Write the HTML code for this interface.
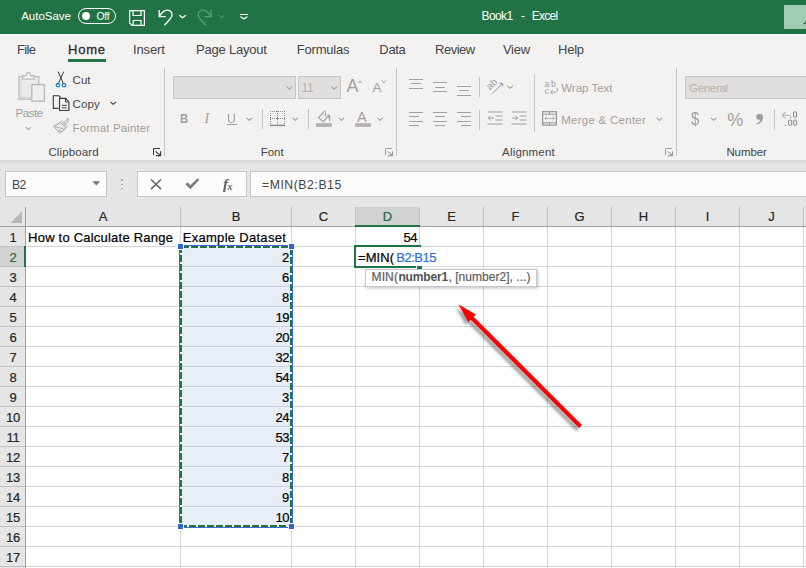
<!DOCTYPE html>
<html><head><meta charset="utf-8"><title>Book1 - Excel</title>
<style>
html,body{margin:0;padding:0;}
body{width:806px;height:568px;overflow:hidden;position:relative;background:#fff;font-family:"Liberation Sans",sans-serif;}
.t{position:absolute;white-space:pre;line-height:1;}
.s{-webkit-text-stroke:0.22px currentColor;}
.a{position:absolute;}
svg{position:absolute;overflow:visible;}
</style></head><body>
<div class="a" style="left:0px;top:0px;width:806px;height:34px;background:#217346;"></div>
<div class="a" style="left:784px;top:5px;width:22px;height:24px;background:#9fcdb3;"></div>
<svg style="left:803px;top:21px" width="3" height="4" viewBox="0 0 3 4"><path d="M0.8 3 L3 1" stroke="#1f4d36" stroke-width="1.2"/></svg>
<div class="a" style="left:78px;top:8px;width:36px;height:14px;border:1px solid #fff;border-radius:8px;"></div>
<div class="a" style="left:82px;top:12px;width:8px;height:8px;border-radius:4px;background:#fff;"></div>
<svg style="left:129px;top:10px" width="16" height="16" viewBox="0 0 16 16"><path d="M0.6 0.6 H15.4 V15.4 H3 L0.6 13 Z" fill="none" stroke="#fff" stroke-width="1.2"/><path d="M4 0.6 V5.5 H12 V0.6 M4.2 15.4 V10.5 H12 V15.4" fill="none" stroke="#fff" stroke-width="1.2"/></svg>
<svg style="left:158px;top:9px" width="16" height="17" viewBox="0 0 16 17"><path d="M1.2 1 V7.6 H7.8" fill="none" stroke="#fff" stroke-width="1.3"/><path d="M1.6 7.2 C4 2.5 8 0.3 11 1.3 C14.5 2.6 15 6.5 12.5 9.5 L6.5 16.3" fill="none" stroke="#fff" stroke-width="1.3"/></svg>
<svg style="left:179px;top:15px" width="6.4" height="3.6" viewBox="0 0 6.4 3.6"><g transform="translate(0.4 0.2)"><path d="M0.3 0.3 L3.2 2.6 L6.1 0.3" fill="none" stroke="#fff" stroke-width="1.3" stroke-linecap="round" stroke-linejoin="round"/></g></svg>
<svg style="left:196px;top:9px" width="16" height="17" viewBox="0 0 16 17"><g transform="translate(0.2 0)"><g transform="translate(16,0) scale(-1,1)"><path d="M1.2 1 V7.6 H7.8" fill="none" stroke="#5c9b78" stroke-width="1.3"/><path d="M1.6 7.2 C4 2.5 8 0.3 11 1.3 C14.5 2.6 15 6.5 12.5 9.5 L6.5 16.3" fill="none" stroke="#5c9b78" stroke-width="1.3"/></g></g></svg>
<svg style="left:219px;top:15px" width="5.4" height="3.4" viewBox="0 0 5.4 3.4"><g transform="translate(0 0.2)"><path d="M0.3 0.3 L2.7 2.4 L5.1 0.3" fill="none" stroke="#4c8d69" stroke-width="1.2" stroke-linecap="round" stroke-linejoin="round"/></g></svg>
<div class="a" style="left:240px;top:13.7px;width:8px;height:1.3px;background:#fff;"></div>
<svg style="left:240px;top:16px" width="6.6" height="3.5" viewBox="0 0 6.6 3.5"><g transform="translate(0.6 0.6)"><path d="M0.3 0.3 L3.3 2.5 L6.3 0.3" fill="none" stroke="#fff" stroke-width="1.3" stroke-linecap="round" stroke-linejoin="round"/></g></svg>
<div class="a" style="left:0px;top:33px;width:806px;height:1px;background:#1a6b3e;"></div>
<div class="a" style="left:0px;top:34px;width:806px;height:126px;background:#f3f2f1;"></div>
<div class="a" style="left:0px;top:34px;width:806px;height:1px;background:#fbfafa;"></div>
<div class="a" style="left:68px;top:59px;width:37.5px;height:2.6px;background:#217346;"></div>
<div class="a" style="left:0;top:160px;width:806px;height:47px;background:linear-gradient(#d2d2d2 0px,#dcdcdc 2px,#e4e4e4 5px,#e6e6e6 7px);"></div>
<div class="a" style="left:164px;top:68px;width:1px;height:88px;background:#c8c6c4;"></div>
<div class="a" style="left:396px;top:68px;width:1px;height:88px;background:#c8c6c4;"></div>
<div class="a" style="left:676px;top:68px;width:1px;height:88px;background:#c8c6c4;"></div>
<svg style="left:26px;top:127px" width="5" height="3.4" viewBox="0 0 5 3.4"><g transform="translate(0 0.3)"><path d="M0.3 0.3 L2.5 2.4 L4.7 0.3" fill="none" stroke="#a19f9d" stroke-width="1.1" stroke-linecap="round" stroke-linejoin="round"/></g></svg>
<svg style="left:110px;top:101px" width="5.6" height="3.6" viewBox="0 0 5.6 3.6"><g transform="translate(0.4 0.8)"><path d="M0.3 0.3 L2.8 2.6 L5.3 0.3" fill="none" stroke="#444" stroke-width="1.2" stroke-linecap="round" stroke-linejoin="round"/></g></svg>
<svg style="left:0;top:0" width="806" height="170" viewBox="0 0 806 170" fill="none"><rect x="18.9" y="76.6" width="19.8" height="22.6" fill="#ebeae9" stroke="#bfbdbb" stroke-width="1.3"/><path d="M20.8 78.5 V97.4 H37" stroke="#d6d4d2" stroke-width="1"/><path d="M22.6 79.2 V75.6 H26.2 Q26.4 72.4 28.4 72.4 Q30.4 72.4 30.6 75.6 H34.2 V79.2 Z" fill="#f3f2f1" stroke="#bfbdbb" stroke-width="1.2"/><rect x="31.8" y="84.6" width="12.6" height="16.6" fill="#efeeed" stroke="#bfbdbb" stroke-width="1.4"/><path d="M58.1 71.6 L63.6 84 M63.7 71.6 L58.2 84" stroke="#3b3a39" stroke-width="1"/><circle cx="57.9" cy="85.2" r="1.7" stroke="#1e8ad6" stroke-width="1.35"/><circle cx="64" cy="85.2" r="1.7" stroke="#1e8ad6" stroke-width="1.35"/><path d="M58.6 108.4 H53.3 V95.7 H58.8 L60.6 97.5" stroke="#3b3a39" stroke-width="1.15"/><path d="M59.5 98.4 H65.6 L68.9 101.9 V110.5 H59.5 Z" fill="#f3f2f1" stroke="#3b3a39" stroke-width="1.15"/><path d="M65.5 98.6 V102 H68.7" stroke="#3b3a39" stroke-width="1"/><path d="M61.8 105.3 H66.7 M61.8 107.9 H66.7" stroke="#3b3a39" stroke-width="1"/><path d="M60.6 122.6 L53.4 126.3 L60.2 133.5 L66.3 127.6 Z" fill="#eae9e8" stroke="#a9a7a5" stroke-width="1" stroke-linejoin="round"/><path d="M55 126.6 L64.3 129.3 M57.6 130.5 L62 131.7" stroke="#a9a7a5" stroke-width="0.9"/><path d="M61.3 121 L67.4 126.4 L66.2 127.7 L60.2 122.5 Z" fill="#f3f2f1" stroke="#a9a7a5" stroke-width="0.9" stroke-linejoin="round"/><path d="M64.8 123.7 L67.8 119.8" stroke="#a9a7a5" stroke-width="2.9" stroke-linecap="round"/><path d="M64.8 123.7 L67.8 119.8" stroke="#f0efee" stroke-width="1.1" stroke-linecap="round"/><path d="M270.5 111 V125" stroke="#8f8d8b" stroke-width="1" stroke-dasharray="1 1" shape-rendering="crispEdges"/><path d="M277.5 111 V125" stroke="#8f8d8b" stroke-width="1" stroke-dasharray="1 1" shape-rendering="crispEdges"/><path d="M284.5 111 V125" stroke="#8f8d8b" stroke-width="1" stroke-dasharray="1 1" shape-rendering="crispEdges"/><path d="M270 111.5 H285" stroke="#8f8d8b" stroke-width="1" stroke-dasharray="1 1" shape-rendering="crispEdges"/><path d="M270 118.5 H285" stroke="#8f8d8b" stroke-width="1" stroke-dasharray="1 1" shape-rendering="crispEdges"/><path d="M276 118.5 H279 M277.5 117 V120" stroke="#8f8d8b" stroke-width="1" shape-rendering="crispEdges"/><rect x="270" y="124.7" width="15" height="1.4" fill="#8a8886"/><path d="M323.4 112.5 L318.5 117.6 L323.2 121.8 L328 116.3" fill="#ecebea" stroke="#a19f9d" stroke-width="1.1" stroke-linejoin="round"/><path d="M323.4 112.6 L323.9 111.3 Q324.7 110.7 325.4 111.4 L325.6 116.3" stroke="#a19f9d" stroke-width="1"/><path d="M327.4 115.2 Q329.4 114 330.1 116.6 L329.7 121 Q329.2 117.5 328.2 116.2 Z" fill="#a19f9d" stroke="#a19f9d" stroke-width="0.7"/><rect x="316.1" y="123.2" width="15.8" height="3.7" fill="#b3b0ae"/><rect x="355.2" y="123.2" width="15.7" height="3.7" fill="#b3b0ae"/><text x="490.1" y="90.4" font-family="Liberation Sans" font-size="10" fill="#a19f9d" transform="rotate(-45 490.1 90.4)">ab</text><path d="M492.2 93.6 L502.5 83.5 M499.2 83.4 H502.6 V86.8" stroke="#a19f9d" stroke-width="1"/><text x="544.5" y="87" font-family="Liberation Sans" font-size="8.8" fill="#a19f9d" letter-spacing="1.7">ab</text><text x="544.5" y="94" font-family="Liberation Sans" font-size="8.8" fill="#a19f9d">c</text><path d="M556.3 87.6 Q559.6 90.2 555.6 92.2 H550.6 M552.9 90.1 L550.5 92.2 L552.9 94.4" stroke="#a19f9d" stroke-width="0.9"/><rect x="542.6" y="111.7" width="13.8" height="13.4" stroke="#979593" stroke-width="1.2"/><path d="M542.6 114.2 H556.4 M542.6 122.8 H556.4 M549.5 111.7 V114.2 M549.5 122.8 V125.1" stroke="#979593" stroke-width="1"/><path d="M544.8 118.5 H554.3 M546.7 116.6 L544.7 118.5 L546.7 120.4 M552.4 116.6 L554.4 118.5 L552.4 120.4" stroke="#b5b3b1" stroke-width="1"/></svg>
<svg style="left:152px;top:148px" width="10" height="9" viewBox="0 0 10 9"><g transform="translate(0.5 0)"><path d="M1 6.9 V0.5 H7.5" fill="none" stroke="#3b3a39" stroke-width="1"/><path d="M3 3.4 L8 7.5 M8.1 3.2 V7.6 H3.5" fill="none" stroke="#3b3a39" stroke-width="1.1"/></g></svg>
<div class="a" style="left:173px;top:76px;width:123px;height:23px;background:#e1dfdd;border:1px solid #c8c6c4;box-sizing:border-box;"></div>
<svg style="left:286px;top:86px" width="5.6" height="3.6" viewBox="0 0 5.6 3.6"><g transform="translate(0.6 0.6)"><path d="M0.3 0.3 L2.8 2.6 L5.3 0.3" fill="none" stroke="#a6a4a2" stroke-width="1.1" stroke-linecap="round" stroke-linejoin="round"/></g></svg>
<div class="a" style="left:298px;top:76px;width:43px;height:23px;background:#e1dfdd;border:1px solid #c8c6c4;box-sizing:border-box;"></div>
<svg style="left:331px;top:86px" width="5.6" height="3.6" viewBox="0 0 5.6 3.6"><g transform="translate(0.4 0.6)"><path d="M0.3 0.3 L2.8 2.6 L5.3 0.3" fill="none" stroke="#a6a4a2" stroke-width="1.1" stroke-linecap="round" stroke-linejoin="round"/></g></svg>
<svg style="left:357px;top:80px" width="6" height="4" viewBox="0 0 6 4"><g transform="translate(0.6 0.3)"><path d="M0.4 3 L2.4 0.7 L4.4 3" fill="none" stroke="#a19f9d" stroke-width="1"/></g></svg>
<svg style="left:381px;top:79px" width="6" height="4" viewBox="0 0 6 4"><g transform="translate(0.2 0.9)"><path d="M0.4 0.6 L2.5 3 L4.6 0.6" fill="none" stroke="#a19f9d" stroke-width="1"/></g></svg>
<div class="a" style="left:227px;top:124.2px;width:9.5px;height:1px;background:#a19f9d;"></div>
<svg style="left:246px;top:117px" width="5.4" height="3.5" viewBox="0 0 5.4 3.5"><g transform="translate(0.6 0.9)"><path d="M0.3 0.3 L2.7 2.5 L5.1 0.3" fill="none" stroke="#a19f9d" stroke-width="1.1" stroke-linecap="round" stroke-linejoin="round"/></g></svg>
<div class="a" style="left:262px;top:109px;width:1px;height:20px;background:#c8c6c4;"></div>
<svg style="left:292px;top:117px" width="5.4" height="3.5" viewBox="0 0 5.4 3.5"><g transform="translate(0.6 0.9)"><path d="M0.3 0.3 L2.7 2.5 L5.1 0.3" fill="none" stroke="#a19f9d" stroke-width="1.1" stroke-linecap="round" stroke-linejoin="round"/></g></svg>
<div class="a" style="left:308px;top:109px;width:1px;height:20px;background:#c8c6c4;"></div>
<svg style="left:338px;top:117px" width="5.4" height="3.5" viewBox="0 0 5.4 3.5"><g transform="translate(0.8 0.9)"><path d="M0.3 0.3 L2.7 2.5 L5.1 0.3" fill="none" stroke="#a19f9d" stroke-width="1.1" stroke-linecap="round" stroke-linejoin="round"/></g></svg>
<svg style="left:377px;top:117px" width="5.4" height="3.5" viewBox="0 0 5.4 3.5"><g transform="translate(0.5 0.9)"><path d="M0.3 0.3 L2.7 2.5 L5.1 0.3" fill="none" stroke="#a19f9d" stroke-width="1.1" stroke-linecap="round" stroke-linejoin="round"/></g></svg>
<svg style="left:384px;top:148px" width="10" height="9" viewBox="0 0 10 9"><g transform="translate(0.5 0)"><path d="M1 6.9 V0.5 H7.5" fill="none" stroke="#a3a09e" stroke-width="1"/><path d="M3 3.4 L8 7.5 M8.1 3.2 V7.6 H3.5" fill="none" stroke="#a3a09e" stroke-width="1.1"/></g></svg>
<div class="a" style="left:409px;top:78.8px;width:14px;height:1px;background:#a19f9d;"></div><div class="a" style="left:411px;top:83.2px;width:10px;height:1px;background:#a19f9d;"></div><div class="a" style="left:409px;top:87.6px;width:14px;height:1px;background:#a19f9d;"></div>
<div class="a" style="left:433px;top:82.2px;width:14px;height:1px;background:#a19f9d;"></div><div class="a" style="left:435px;top:86.6px;width:10px;height:1px;background:#a19f9d;"></div><div class="a" style="left:433px;top:91px;width:14px;height:1px;background:#a19f9d;"></div>
<div class="a" style="left:457px;top:86px;width:14px;height:1px;background:#a19f9d;"></div><div class="a" style="left:459px;top:90.4px;width:10px;height:1px;background:#a19f9d;"></div><div class="a" style="left:457px;top:94.8px;width:14px;height:1px;background:#a19f9d;"></div>
<div class="a" style="left:479px;top:77px;width:1px;height:20px;background:#c8c6c4;"></div>
<svg style="left:507px;top:85px" width="5.4" height="3.5" viewBox="0 0 5.4 3.5"><g transform="translate(0.4 0.8)"><path d="M0.3 0.3 L2.7 2.5 L5.1 0.3" fill="none" stroke="#a19f9d" stroke-width="1.1" stroke-linecap="round" stroke-linejoin="round"/></g></svg>
<div class="a" style="left:533.8px;top:74px;width:1px;height:58px;background:#c8c6c4;"></div>
<div class="a" style="left:409px;top:112.2px;width:14px;height:1px;background:#a19f9d;"></div><div class="a" style="left:409px;top:116.4px;width:10px;height:1px;background:#a19f9d;"></div><div class="a" style="left:409px;top:120.6px;width:14px;height:1px;background:#a19f9d;"></div><div class="a" style="left:409px;top:124.8px;width:10px;height:1px;background:#a19f9d;"></div>
<div class="a" style="left:433px;top:112.2px;width:14px;height:1px;background:#a19f9d;"></div><div class="a" style="left:435px;top:116.4px;width:10px;height:1px;background:#a19f9d;"></div><div class="a" style="left:433px;top:120.6px;width:14px;height:1px;background:#a19f9d;"></div><div class="a" style="left:435px;top:124.8px;width:10px;height:1px;background:#a19f9d;"></div>
<div class="a" style="left:457px;top:112.2px;width:14px;height:1px;background:#a19f9d;"></div><div class="a" style="left:461px;top:116.4px;width:10px;height:1px;background:#a19f9d;"></div><div class="a" style="left:457px;top:120.6px;width:14px;height:1px;background:#a19f9d;"></div><div class="a" style="left:461px;top:124.8px;width:10px;height:1px;background:#a19f9d;"></div>
<div class="a" style="left:479px;top:109.5px;width:1px;height:20px;background:#c8c6c4;"></div>
<svg style="left:487px;top:111px" width="15" height="14" viewBox="0 0 15 14"><g transform="translate(0.5 0.5)"><path d="M0 0.5 H15 M8 4.5 H15 M8 8.5 H15 M0 12.5 H15" stroke="#a19f9d" stroke-width="1"/><path d="M6.5 6.5 H0.8 M3 4.3 L0.8 6.5 L3 8.7" fill="none" stroke="#a19f9d" stroke-width="1"/></g></svg>
<svg style="left:511px;top:111px" width="15" height="14" viewBox="0 0 15 14"><g transform="translate(0.5 0.5)"><path d="M0 0.5 H15 M8 4.5 H15 M8 8.5 H15 M0 12.5 H15" stroke="#a19f9d" stroke-width="1"/><path d="M0.5 6.5 H6.2 M4 4.3 L6.2 6.5 L4 8.7" fill="none" stroke="#a19f9d" stroke-width="1"/></g></svg>
<svg style="left:656px;top:117px" width="5.4" height="3.5" viewBox="0 0 5.4 3.5"><g transform="translate(0.8 0.9)"><path d="M0.3 0.3 L2.7 2.5 L5.1 0.3" fill="none" stroke="#a19f9d" stroke-width="1.1" stroke-linecap="round" stroke-linejoin="round"/></g></svg>
<svg style="left:664px;top:148px" width="10" height="9" viewBox="0 0 10 9"><g transform="translate(0.5 0)"><path d="M1 6.9 V0.5 H7.5" fill="none" stroke="#a3a09e" stroke-width="1"/><path d="M3 3.4 L8 7.5 M8.1 3.2 V7.6 H3.5" fill="none" stroke="#a3a09e" stroke-width="1.1"/></g></svg>
<div class="a" style="left:685px;top:76px;width:125px;height:23px;background:#e1dfdd;border:1px solid #c8c6c4;box-sizing:border-box;"></div>
<svg style="left:711px;top:117px" width="5.4" height="3.5" viewBox="0 0 5.4 3.5"><g transform="translate(0 0.8)"><path d="M0.3 0.3 L2.7 2.5 L5.1 0.3" fill="none" stroke="#a19f9d" stroke-width="1.1" stroke-linecap="round" stroke-linejoin="round"/></g></svg>
<svg style="left:755px;top:113px" width="8.6" height="12.2" viewBox="0 0 9 12"><g transform="translate(0.2 0)"><path d="M4.6 0.3 C7 0.3 8.3 2 8.3 4.2 C8.3 7.6 5.6 10.4 1.6 11.6 L1.2 10.7 C3.6 9.7 5 8.3 5.2 6.6 C4.9 6.7 4.6 6.8 4.2 6.8 C2.3 6.8 1 5.4 1 3.6 C1 1.7 2.6 0.3 4.6 0.3 Z" fill="#a19f9d"/></g></svg>
<div class="a" style="left:773.9px;top:109px;width:1px;height:20.6px;background:#c8c6c4;"></div>
<svg style="left:0;top:0" width="806" height="170" viewBox="0 0 806 170" fill="none"><path d="M790.6 115.3 H782.4 M785.7 112.2 L782.4 115.3 L785.7 118.4" stroke="#b8b6b4" stroke-width="1.1"/><rect x="793.5" y="111.7" width="3.1" height="5.6" rx="1.55" stroke="#8f8d8b" stroke-width="1.05"/><rect x="788.6" y="120" width="3.1" height="5.4" rx="1.55" stroke="#8f8d8b" stroke-width="1.05"/><rect x="793.5" y="120" width="3.1" height="5.4" rx="1.55" stroke="#8f8d8b" stroke-width="1.05"/><rect x="789.9" y="116.7" width="1.2" height="1.2" fill="#8f8d8b"/><rect x="784.9" y="124.8" width="1.2" height="1.2" fill="#8f8d8b"/></svg>
<div class="a" style="left:5px;top:171px;width:102px;height:26px;background:#fcfcfc;border:1px solid #c6c6c6;box-sizing:border-box;"></div>
<svg style="left:92px;top:181px" width="9" height="5" viewBox="0 0 9 5"><path d="M0.3 0.3 H8.3 L4.3 4.6 Z" fill="#777"/></svg>
<div class="a" style="left:121.2px;top:179.4px;width:1.6px;height:1.6px;background:#a6a6a6;"></div>
<div class="a" style="left:121.2px;top:183.5px;width:1.6px;height:1.6px;background:#a6a6a6;"></div>
<div class="a" style="left:121.2px;top:187.6px;width:1.6px;height:1.6px;background:#a6a6a6;"></div>
<div class="a" style="left:137px;top:171px;width:110px;height:26px;background:#fcfcfc;border:1px solid #c6c6c6;box-sizing:border-box;"></div>
<svg style="left:150px;top:178px" width="12" height="12" viewBox="0 0 12 12"><g transform="translate(0 0.5)"><path d="M1 1 L11 10.6 M11 1 L1 10.6" stroke="#6a6a6a" stroke-width="1.6"/></g></svg>
<svg style="left:185px;top:178px" width="15" height="12" viewBox="0 0 15 12"><path d="M0.4 6.2 L2.6 4.3 L5.4 7.3 L12.7 0.3 L14.3 1.8 L5.4 11.2 Z" fill="#7a7a7a"/></svg>
<span class="t" style="left:223px;top:176.5px;font-family:'Liberation Serif',serif;font-style:italic;font-weight:bold;font-size:15px;color:#5e5e5e;letter-spacing:-1px;">f<span style="font-size:10px;position:relative;top:1px;left:0.5px">x</span></span>
<div class="a" style="left:250px;top:171px;width:560px;height:26px;background:#fcfcfc;border:1px solid #c6c6c6;box-sizing:border-box;"></div>
<span id="t0" class="t" style="left:21.20px;top:11.00px;font-size:11.5px;color:#fff;letter-spacing:-0.010px;">AutoSave</span>
<span id="t1" class="t" style="left:96.60px;top:12.00px;font-size:10.2px;color:#fff;letter-spacing:-0.163px;">Off</span>
<span id="t2" class="t" style="left:481.60px;top:10.00px;font-size:12px;color:#fff;letter-spacing:-0.607px;">Book1</span>
<span id="t3" class="t" style="left:521.00px;top:10.00px;font-size:12px;color:#fff;letter-spacing:0.000px;">-</span>
<span id="t4" class="t" style="left:531.80px;top:10.00px;font-size:12px;color:#fff;letter-spacing:-0.743px;">Excel</span>
<span id="t5" class="t" style="left:17.10px;top:43.00px;font-size:13px;color:#444444;letter-spacing:-0.672px;">File</span>
<span id="t6" class="t" style="left:132.90px;top:43.00px;font-size:13px;color:#444444;letter-spacing:-0.094px;">Insert</span>
<span id="t7" class="t" style="left:196.10px;top:43.00px;font-size:13px;color:#444444;letter-spacing:-0.221px;">Page Layout</span>
<span id="t8" class="t" style="left:296.70px;top:43.00px;font-size:13px;color:#444444;letter-spacing:-0.185px;">Formulas</span>
<span id="t9" class="t" style="left:379.30px;top:43.00px;font-size:13px;color:#444444;letter-spacing:-0.305px;">Data</span>
<span id="t10" class="t" style="left:435.10px;top:43.00px;font-size:13px;color:#444444;letter-spacing:-0.495px;">Review</span>
<span id="t11" class="t" style="left:502.90px;top:43.00px;font-size:13px;color:#444444;letter-spacing:-0.244px;">View</span>
<span id="t12" class="t" style="left:558.00px;top:43.00px;font-size:13px;color:#444444;letter-spacing:-0.214px;">Help</span>
<span id="t13" class="t" style="left:68.10px;top:43.00px;font-size:13px;color:#2b2b2b;letter-spacing:0.718px;-webkit-text-stroke:0.28px #2b2b2b">Home</span>
<span id="t14" class="t" style="left:15.40px;top:108.00px;font-size:11.5px;color:#a19f9d;letter-spacing:-0.427px;">Paste</span>
<span id="t15" class="t" style="left:72.50px;top:75.00px;font-size:11.5px;color:#444444;letter-spacing:0.077px;">Cut</span>
<span id="t16" class="t" style="left:72.50px;top:99.00px;font-size:11.5px;color:#444444;letter-spacing:0.126px;">Copy</span>
<span id="t17" class="t" style="left:72.50px;top:123.00px;font-size:11.5px;color:#a19f9d;letter-spacing:0.114px;">Format Painter</span>
<span id="t18" class="t" style="left:48.40px;top:147.00px;font-size:11.5px;color:#444444;letter-spacing:0.137px;">Clipboard</span>
<span id="t19" class="t" style="left:301.60px;top:82.00px;font-size:12px;color:#b3b0ad;letter-spacing:-0.312px;">11</span>
<span id="t20" class="t" style="left:346.60px;top:78.00px;font-size:17.8px;color:#a19f9d;letter-spacing:0.000px;">A</span>
<span id="t21" class="t" style="left:372.40px;top:81.00px;font-size:13.5px;color:#a19f9d;letter-spacing:0.000px;">A</span>
<span id="t22" class="t" style="left:179.90px;top:112.00px;font-size:13.3px;color:#a19f9d;letter-spacing:0.000px;font-weight:bold;transform:scaleX(0.86);transform-origin:0 0;">B</span>
<span id="t23" class="t" style="left:204.60px;top:112.00px;font-size:14px;color:#a19f9d;letter-spacing:0.000px;font-style:italic;font-family:'Liberation Serif',serif;">I</span>
<span id="t24" class="t" style="left:226.80px;top:112.00px;font-size:13.3px;color:#a19f9d;letter-spacing:0.000px;transform:scaleX(0.92);transform-origin:0 0;">U</span>
<span id="t25" class="t" style="left:357.00px;top:110.00px;font-size:14.5px;color:#a19f9d;letter-spacing:0.000px;">A</span>
<span id="t26" class="t" style="left:260.70px;top:147.00px;font-size:11.5px;color:#444444;letter-spacing:-0.033px;">Font</span>
<span id="t27" class="t" style="left:561.20px;top:83.00px;font-size:11.5px;color:#a19f9d;letter-spacing:-0.007px;">Wrap Text</span>
<span id="t28" class="t" style="left:561.20px;top:115.00px;font-size:11.5px;color:#a19f9d;letter-spacing:0.268px;">Merge &amp; Center</span>
<span id="t29" class="t" style="left:502.10px;top:147.00px;font-size:11.5px;color:#444444;letter-spacing:0.183px;">Alignment</span>
<span id="t30" class="t" style="left:689.00px;top:83.00px;font-size:11.5px;color:#b3b0ad;letter-spacing:-0.311px;">General</span>
<span id="t31" class="t" style="left:691.30px;top:111.00px;font-size:17.5px;color:#a19f9d;letter-spacing:0.000px;transform:scaleX(0.85);transform-origin:0 0;">$</span>
<span id="t32" class="t" style="left:727.30px;top:111.00px;font-size:18px;color:#a19f9d;letter-spacing:0.000px;">%</span>
<span id="t33" class="t" style="left:726.40px;top:147.00px;font-size:11.5px;color:#444444;letter-spacing:-0.092px;">Number</span>
<span id="t34" class="t" style="left:12.00px;top:179.00px;font-size:12.2px;color:#444444;letter-spacing:-0.615px;">B2</span>
<span id="t35" class="t" style="left:262.00px;top:179.00px;font-size:12.2px;color:#444444;letter-spacing:0.571px;">=MIN(B2:B15</span>
<div class="a" style="left:0px;top:207px;width:806px;height:361px;background:#fff;"></div>
<div class="a" style="left:0px;top:207px;width:806px;height:20px;background:#e6e6e6;"></div>
<div class="a" style="left:0px;top:227px;width:26px;height:341px;background:#e6e6e6;"></div>
<div class="a" style="left:356px;top:207px;width:63px;height:19px;background:#d2d2d2;"></div>
<div class="a" style="left:0px;top:247px;width:24px;height:19px;background:#d2d2d2;"></div>
<div class="a" style="left:180px;top:227px;width:1px;height:341px;background:#d4d4d4;"></div>
<div class="a" style="left:291px;top:227px;width:1px;height:341px;background:#d4d4d4;"></div>
<div class="a" style="left:355px;top:227px;width:1px;height:341px;background:#d4d4d4;"></div>
<div class="a" style="left:419px;top:227px;width:1px;height:341px;background:#d4d4d4;"></div>
<div class="a" style="left:483px;top:227px;width:1px;height:341px;background:#d4d4d4;"></div>
<div class="a" style="left:547px;top:227px;width:1px;height:341px;background:#d4d4d4;"></div>
<div class="a" style="left:611px;top:227px;width:1px;height:341px;background:#d4d4d4;"></div>
<div class="a" style="left:675px;top:227px;width:1px;height:341px;background:#d4d4d4;"></div>
<div class="a" style="left:739px;top:227px;width:1px;height:341px;background:#d4d4d4;"></div>
<div class="a" style="left:803px;top:227px;width:1px;height:341px;background:#d4d4d4;"></div>
<div class="a" style="left:26px;top:246px;width:780px;height:1px;background:#d4d4d4;"></div>
<div class="a" style="left:26px;top:266px;width:780px;height:1px;background:#d4d4d4;"></div>
<div class="a" style="left:26px;top:286px;width:780px;height:1px;background:#d4d4d4;"></div>
<div class="a" style="left:26px;top:306px;width:780px;height:1px;background:#d4d4d4;"></div>
<div class="a" style="left:26px;top:326px;width:780px;height:1px;background:#d4d4d4;"></div>
<div class="a" style="left:26px;top:346px;width:780px;height:1px;background:#d4d4d4;"></div>
<div class="a" style="left:26px;top:366px;width:780px;height:1px;background:#d4d4d4;"></div>
<div class="a" style="left:26px;top:386px;width:780px;height:1px;background:#d4d4d4;"></div>
<div class="a" style="left:26px;top:406px;width:780px;height:1px;background:#d4d4d4;"></div>
<div class="a" style="left:26px;top:426px;width:780px;height:1px;background:#d4d4d4;"></div>
<div class="a" style="left:26px;top:446px;width:780px;height:1px;background:#d4d4d4;"></div>
<div class="a" style="left:26px;top:466px;width:780px;height:1px;background:#d4d4d4;"></div>
<div class="a" style="left:26px;top:486px;width:780px;height:1px;background:#d4d4d4;"></div>
<div class="a" style="left:26px;top:506px;width:780px;height:1px;background:#d4d4d4;"></div>
<div class="a" style="left:26px;top:526px;width:780px;height:1px;background:#d4d4d4;"></div>
<div class="a" style="left:26px;top:546px;width:780px;height:1px;background:#d4d4d4;"></div>
<div class="a" style="left:26px;top:566px;width:780px;height:1px;background:#d4d4d4;"></div>
<div class="a" style="left:180px;top:207px;width:1px;height:19px;background:#c2c2c2;"></div>
<div class="a" style="left:291px;top:207px;width:1px;height:19px;background:#c2c2c2;"></div>
<div class="a" style="left:355px;top:207px;width:1px;height:19px;background:#c2c2c2;"></div>
<div class="a" style="left:419px;top:207px;width:1px;height:19px;background:#c2c2c2;"></div>
<div class="a" style="left:483px;top:207px;width:1px;height:19px;background:#c2c2c2;"></div>
<div class="a" style="left:547px;top:207px;width:1px;height:19px;background:#c2c2c2;"></div>
<div class="a" style="left:611px;top:207px;width:1px;height:19px;background:#c2c2c2;"></div>
<div class="a" style="left:675px;top:207px;width:1px;height:19px;background:#c2c2c2;"></div>
<div class="a" style="left:739px;top:207px;width:1px;height:19px;background:#c2c2c2;"></div>
<div class="a" style="left:803px;top:207px;width:1px;height:19px;background:#c2c2c2;"></div>
<div class="a" style="left:0px;top:246px;width:25px;height:1px;background:#c2c2c2;"></div>
<div class="a" style="left:0px;top:266px;width:25px;height:1px;background:#c2c2c2;"></div>
<div class="a" style="left:0px;top:286px;width:25px;height:1px;background:#c2c2c2;"></div>
<div class="a" style="left:0px;top:306px;width:25px;height:1px;background:#c2c2c2;"></div>
<div class="a" style="left:0px;top:326px;width:25px;height:1px;background:#c2c2c2;"></div>
<div class="a" style="left:0px;top:346px;width:25px;height:1px;background:#c2c2c2;"></div>
<div class="a" style="left:0px;top:366px;width:25px;height:1px;background:#c2c2c2;"></div>
<div class="a" style="left:0px;top:386px;width:25px;height:1px;background:#c2c2c2;"></div>
<div class="a" style="left:0px;top:406px;width:25px;height:1px;background:#c2c2c2;"></div>
<div class="a" style="left:0px;top:426px;width:25px;height:1px;background:#c2c2c2;"></div>
<div class="a" style="left:0px;top:446px;width:25px;height:1px;background:#c2c2c2;"></div>
<div class="a" style="left:0px;top:466px;width:25px;height:1px;background:#c2c2c2;"></div>
<div class="a" style="left:0px;top:486px;width:25px;height:1px;background:#c2c2c2;"></div>
<div class="a" style="left:0px;top:506px;width:25px;height:1px;background:#c2c2c2;"></div>
<div class="a" style="left:0px;top:526px;width:25px;height:1px;background:#c2c2c2;"></div>
<div class="a" style="left:0px;top:546px;width:25px;height:1px;background:#c2c2c2;"></div>
<div class="a" style="left:0px;top:566px;width:25px;height:1px;background:#c2c2c2;"></div>
<div class="a" style="left:25px;top:207px;width:1px;height:361px;background:#9f9f9f;"></div>
<div class="a" style="left:0px;top:226px;width:806px;height:1px;background:#9f9f9f;"></div>
<svg style="left:10px;top:211px" width="12" height="12" viewBox="0 0 12 12"><g transform="translate(0.5 0.5)"><path d="M11.5 0 V11.5 H0 Z" fill="#b7b7b7"/></g></svg>
<div class="a" style="left:355px;top:225px;width:65px;height:2px;background:#217346;"></div>
<div class="a" style="left:24px;top:246px;width:2px;height:21px;background:#217346;"></div>
<div class="a" style="left:182px;top:248px;width:108px;height:277px;background:rgba(180,198,231,0.30);"></div>
<div class="a" style="left:179px;top:245px;width:114px;height:1px;background:#3c6bc9;"></div>
<div class="a" style="left:179px;top:527px;width:114px;height:1px;background:#3c6bc9;"></div>
<div class="a" style="left:179px;top:245px;width:1px;height:283px;background:#3c6bc9;"></div>
<div class="a" style="left:292px;top:245px;width:1px;height:283px;background:#3c6bc9;"></div>
<div class="a" style="left:180px;top:246px;width:112px;height:2px;background:repeating-linear-gradient(90deg,#217346 0,#217346 7px,#fff 7px,#fff 9px);background-position:2px 0;"></div>
<div class="a" style="left:180px;top:525px;width:112px;height:2px;background:repeating-linear-gradient(90deg,#217346 0,#217346 7px,#fff 7px,#fff 9px);background-position:0px 0;"></div>
<div class="a" style="left:180px;top:246px;width:2px;height:281px;background:repeating-linear-gradient(180deg,#217346 0,#217346 7px,#fff 7px,#fff 9px);background-position:0 0px;"></div>
<div class="a" style="left:290px;top:246px;width:2px;height:281px;background:repeating-linear-gradient(180deg,#217346 0,#217346 7px,#fff 7px,#fff 9px);background-position:0 2px;"></div>
<div class="a" style="left:177px;top:243px;width:7px;height:7px;background:#fff;"></div>
<div class="a" style="left:178px;top:244px;width:5px;height:5px;background:#3366cc;"></div>
<div class="a" style="left:288px;top:243px;width:7px;height:7px;background:#fff;"></div>
<div class="a" style="left:289px;top:244px;width:5px;height:5px;background:#3366cc;"></div>
<div class="a" style="left:177px;top:523px;width:7px;height:7px;background:#fff;"></div>
<div class="a" style="left:178px;top:524px;width:5px;height:5px;background:#3366cc;"></div>
<div class="a" style="left:288px;top:523px;width:7px;height:7px;background:#fff;"></div>
<div class="a" style="left:289px;top:524px;width:5px;height:5px;background:#3366cc;"></div>
<div class="a" style="left:356px;top:247px;width:84px;height:19px;background:#fff;"></div>
<div class="a" style="left:354px;top:245px;width:67px;height:2px;background:#217346;"></div>
<div class="a" style="left:354px;top:245px;width:2px;height:23px;background:#217346;"></div>
<div class="a" style="left:354px;top:266px;width:62px;height:2px;background:#217346;"></div>
<div class="a" style="left:416px;top:265px;width:7px;height:5px;background:#fff;"></div>
<div class="a" style="left:417px;top:266px;width:5px;height:3px;background:#217346;"></div>
<div class="a" style="left:365px;top:269px;width:172px;height:18px;background:#fff;border:1px solid #c8c8c8;box-sizing:border-box;box-shadow:1px 1px 3px rgba(0,0,0,0.25);"></div>
<span class="t s" style="left:98.66px;top:210.00px;font-size:13px;color:#262626;letter-spacing:0.000px;">A</span>
<span class="t s" style="left:231.66px;top:210.00px;font-size:13px;color:#262626;letter-spacing:0.000px;">B</span>
<span class="t s" style="left:318.80px;top:210.00px;font-size:13px;color:#262626;letter-spacing:0.000px;">C</span>
<span class="t s" style="left:382.80px;top:210.00px;font-size:13px;color:#1e6b41;letter-spacing:0.000px;">D</span>
<span class="t s" style="left:447.16px;top:210.00px;font-size:13px;color:#262626;letter-spacing:0.000px;">E</span>
<span class="t s" style="left:511.52px;top:210.00px;font-size:13px;color:#262626;letter-spacing:0.000px;">F</span>
<span class="t s" style="left:574.44px;top:210.00px;font-size:13px;color:#262626;letter-spacing:0.000px;">G</span>
<span class="t s" style="left:638.80px;top:210.00px;font-size:13px;color:#262626;letter-spacing:0.000px;">H</span>
<span class="t s" style="left:705.69px;top:210.00px;font-size:13px;color:#262626;letter-spacing:0.000px;">I</span>
<span class="t s" style="left:768.25px;top:210.00px;font-size:13px;color:#262626;letter-spacing:0.000px;">J</span>
<span class="t s" style="left:9.38px;top:231.00px;font-size:13px;color:#262626;letter-spacing:0.000px;">1</span>
<span class="t s" style="left:9.38px;top:251.00px;font-size:13px;color:#1e6b41;letter-spacing:0.000px;">2</span>
<span class="t s" style="left:9.38px;top:271.00px;font-size:13px;color:#262626;letter-spacing:0.000px;">3</span>
<span class="t s" style="left:9.38px;top:291.00px;font-size:13px;color:#262626;letter-spacing:0.000px;">4</span>
<span class="t s" style="left:9.38px;top:311.00px;font-size:13px;color:#262626;letter-spacing:0.000px;">5</span>
<span class="t s" style="left:9.38px;top:331.00px;font-size:13px;color:#262626;letter-spacing:0.000px;">6</span>
<span class="t s" style="left:9.38px;top:351.00px;font-size:13px;color:#262626;letter-spacing:0.000px;">7</span>
<span class="t s" style="left:9.38px;top:371.00px;font-size:13px;color:#262626;letter-spacing:0.000px;">8</span>
<span class="t s" style="left:9.38px;top:391.00px;font-size:13px;color:#262626;letter-spacing:0.000px;">9</span>
<span class="t s" style="left:6.12px;top:411.00px;font-size:13px;color:#262626;letter-spacing:-0.350px;">10</span>
<span class="t s" style="left:6.60px;top:431.00px;font-size:13px;color:#262626;letter-spacing:-0.350px;">11</span>
<span class="t s" style="left:6.12px;top:451.00px;font-size:13px;color:#262626;letter-spacing:-0.350px;">12</span>
<span class="t s" style="left:6.12px;top:471.00px;font-size:13px;color:#262626;letter-spacing:-0.350px;">13</span>
<span class="t s" style="left:6.12px;top:491.00px;font-size:13px;color:#262626;letter-spacing:-0.350px;">14</span>
<span class="t s" style="left:6.12px;top:511.00px;font-size:13px;color:#262626;letter-spacing:-0.350px;">15</span>
<span class="t s" style="left:6.12px;top:531.00px;font-size:13px;color:#262626;letter-spacing:-0.350px;">16</span>
<span class="t s" style="left:6.12px;top:551.00px;font-size:13px;color:#262626;letter-spacing:-0.350px;">17</span>
<span class="t s" style="left:28.10px;top:231.00px;font-size:13px;color:#000;letter-spacing:0.218px;">How to Calculate Range</span>
<span class="t s" style="left:182.70px;top:231.00px;font-size:13px;color:#000;letter-spacing:0.297px;">Example Dataset</span>
<span class="t s" style="left:281.97px;top:251.00px;font-size:13px;color:#000;letter-spacing:0.000px;">2</span>
<span class="t s" style="left:281.97px;top:271.00px;font-size:13px;color:#000;letter-spacing:0.000px;">6</span>
<span class="t s" style="left:281.97px;top:291.00px;font-size:13px;color:#000;letter-spacing:0.000px;">8</span>
<span class="t s" style="left:275.43px;top:311.00px;font-size:13px;color:#000;letter-spacing:-0.350px;">19</span>
<span class="t s" style="left:275.43px;top:331.00px;font-size:13px;color:#000;letter-spacing:-0.350px;">20</span>
<span class="t s" style="left:275.43px;top:351.00px;font-size:13px;color:#000;letter-spacing:-0.350px;">32</span>
<span class="t s" style="left:275.43px;top:371.00px;font-size:13px;color:#000;letter-spacing:-0.350px;">54</span>
<span class="t s" style="left:281.97px;top:391.00px;font-size:13px;color:#000;letter-spacing:0.000px;">3</span>
<span class="t s" style="left:275.43px;top:411.00px;font-size:13px;color:#000;letter-spacing:-0.350px;">24</span>
<span class="t s" style="left:275.43px;top:431.00px;font-size:13px;color:#000;letter-spacing:-0.350px;">53</span>
<span class="t s" style="left:281.97px;top:451.00px;font-size:13px;color:#000;letter-spacing:0.000px;">7</span>
<span class="t s" style="left:281.97px;top:471.00px;font-size:13px;color:#000;letter-spacing:0.000px;">8</span>
<span class="t s" style="left:281.97px;top:491.00px;font-size:13px;color:#000;letter-spacing:0.000px;">9</span>
<span class="t s" style="left:275.43px;top:511.00px;font-size:13px;color:#000;letter-spacing:-0.350px;">10</span>
<span class="t s" style="left:403.43px;top:231.00px;font-size:13px;color:#000;letter-spacing:-0.350px;">54</span>
<span class="t s" style="left:358.00px;top:251.00px;font-size:13px;color:#000;letter-spacing:0.100px;">=MIN(</span>
<span class="t s" style="left:396.30px;top:251.00px;font-size:13px;color:#2e6fd6;letter-spacing:-0.501px;">B2:B15</span>
<span class="t s" style="left:371.50px;top:271.00px;font-size:12px;color:#606060;letter-spacing:0.143px;">MIN(</span>
<span class="t s" style="left:398.40px;top:271.00px;font-size:12px;color:#505050;letter-spacing:-0.167px;font-weight:bold;-webkit-text-stroke:0;">number1</span>
<span class="t s" style="left:448.50px;top:271.00px;font-size:12px;color:#606060;letter-spacing:0.038px;">, [number2], ...)</span>
<svg style="left:0;top:0" width="806" height="568" viewBox="0 0 806 568"><defs><filter id="sh" x="-20%" y="-20%" width="140%" height="140%"><feGaussianBlur stdDeviation="1.7"/></filter></defs><g transform="translate(-2.6,3.2)" opacity="0.5" filter="url(#sh)"><path d="M580.5 426.5 L471 317" stroke="#444" stroke-width="4.2" fill="none"/><path d="M458.3 304.3 L475.9 314.6 L468.4 321.9 Z" fill="#444"/></g><path d="M580.5 426.5 L471 317" stroke="#fe0000" stroke-width="4.1" fill="none"/><path d="M458.3 304.3 L475.9 314.6 L468.4 321.9 Z" fill="#fe0000"/></svg>
</body></html>
